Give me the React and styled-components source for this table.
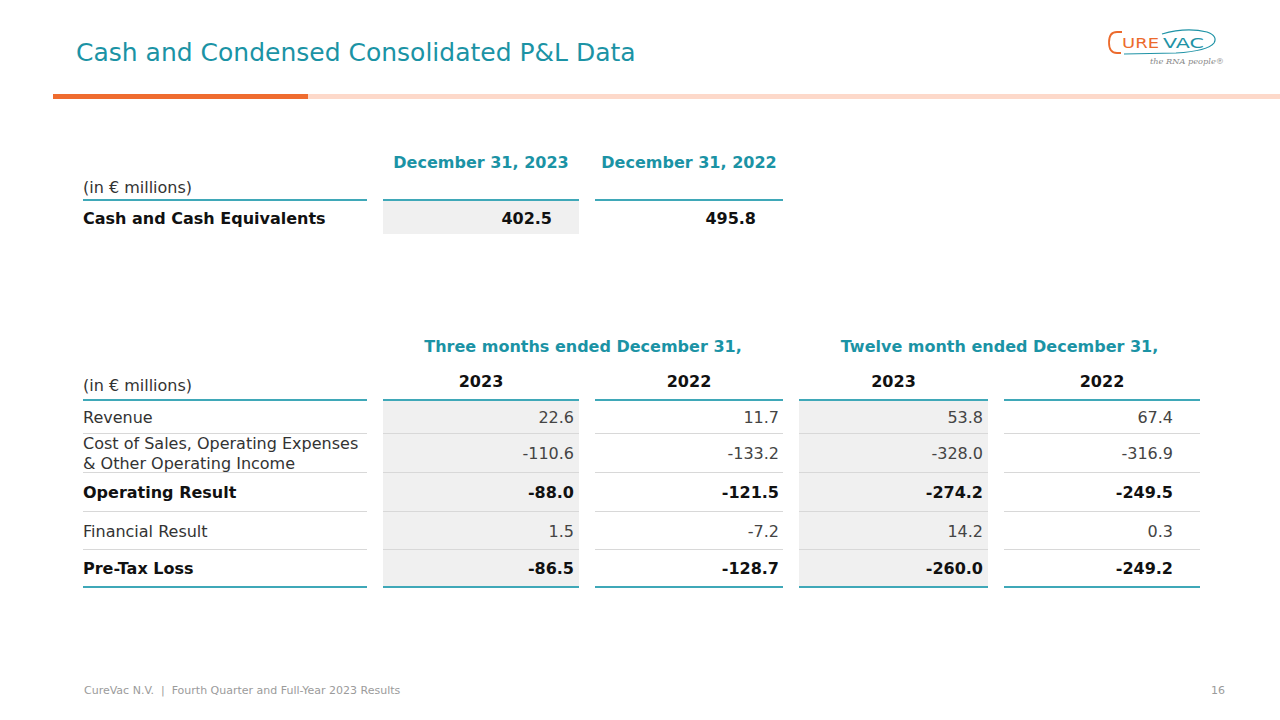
import React from 'react';
import styled, {createGlobalStyle} from "styled-components";

const GlobalStyle = createGlobalStyle`
  html, body {
    margin: 0;
    padding: 0;
    background: #fff;
  }
  * { box-sizing: border-box; }
`;

const TEAL = '#1b93a5';
const LINE = '#3fa8b8';
const SHADE = '#f0f0f0';
const SEP = '#d8d8d8';

const Slide = styled.div`
  width: 1280px;
  height: 720px;
  display: flex;
  flex-direction: column;
  background: #fff;
  font-family: "DejaVu Sans", Verdana, sans-serif;
  color: #222;
  overflow: hidden;
`;

const Header = styled.header`
  height: 94px;
  display: flex;
  justify-content: space-between;
  align-items: flex-start;
  padding: 0 52px 0 76px;
`;

const Title = styled.h1`
  margin: 37px 0 0;
  font-size: 25px;
  line-height: 31px;
  font-weight: 400;
  color: ${TEAL};
`;

const LogoWrap = styled.div`
  margin-top: 26px;
  width: 122px;
  height: 46px;
`;

const Rule = styled.div`
  height: 5px;
  margin-left: 53px;
  background: linear-gradient(to right, #ef6c2f 255px, #fdd9ca 255px);
`;

const Table = styled.div`
  display: grid;
  grid-template-columns: ${p => p.$cols};
  column-gap: 16px;
  margin: ${p => p.$margin};
  font-size: 16px;
`;

const LabelHead = styled.div`
  height: ${p => p.$h}px;
  display: flex;
  align-items: flex-end;
  padding-bottom: ${p => p.$pb}px;
  line-height: 19px;
  color: #333;
  border-bottom: 2px solid ${LINE};
`;

const ColHead = styled.div`
  height: ${p => p.$h}px;
  padding-top: ${p => p.$pt}px;
  text-align: center;
  line-height: 19px;
  font-weight: 700;
  color: ${p => p.$teal ? TEAL : '#111'};
  border-bottom: ${p => p.$line ? `2px solid ${LINE}` : 'none'};
`;

const GroupHead = styled.div`
  grid-column: ${p => p.$span};
  height: 22px;
  line-height: 22px;
  text-align: center;
  font-weight: 700;
  color: ${TEAL};
`;

const Spacer = styled.div`
  grid-column: ${p => p.$span};
`;

const Label = styled.div`
  height: ${p => p.$h}px;
  display: flex;
  align-items: center;
  padding-top: 2px;
  line-height: 20px;
  font-weight: ${p => p.$bold ? 700 : 400};
  color: ${p => p.$bold ? '#111' : '#333'};
  border-bottom: ${p => p.$last ? `2px solid ${LINE}` : p.$sep ? `1px solid ${SEP}` : 'none'};
`;

const Value = styled(Label)`
  justify-content: flex-end;
  padding-right: ${p => p.$pr}px;
  background: ${p => p.$shade ? SHADE : 'transparent'};
  color: ${p => p.$bold ? '#111' : '#444'};
`;

const Footer = styled.footer`
  margin-top: auto;
  display: flex;
  justify-content: space-between;
  padding: 0 55px 23px 84px;
  font-size: 11px;
  line-height: 13px;
  color: #9b9b9b;
`;

const Logo = () => (
    <svg width="122" height="46" viewBox="0 0 122 46">
        <path d="M16 6 L11 6 Q3 6 3 16.5 Q3 27 11 27 L15 27" fill="none" stroke="#ec6a2c" strokeWidth="1.8"/>
        <text x="16" y="21.5" fontFamily="DejaVu Sans, sans-serif" fontSize="14" fill="#ec6a2c" textLength="37" lengthAdjust="spacingAndGlyphs">URE</text>
        <text x="57" y="21.5" fontFamily="DejaVu Sans, sans-serif" fontSize="14" fill="#1f93a6" textLength="41" lengthAdjust="spacingAndGlyphs">VAC</text>
        <path d="M56 8 Q80 1 101 6 Q112 10 108 17 Q102 25 70 27 L18 28" fill="none" stroke="#1f93a6" strokeWidth="1.2"/>
        <text x="118" y="38" fontFamily="DejaVu Serif, serif" fontStyle="italic" fontSize="8" fill="#888" textAnchor="end" textLength="74" lengthAdjust="spacingAndGlyphs">the RNA people®</text>
    </svg>
);

const topCols = '284px 196px 188px';
const bottomCols = '284px 196px 188px 189px 196px';
const pads = [5, 4, 5, 27];

const rows = [
    {label: 'Revenue', values: ['22.6', '11.7', '53.8', '67.4'], h: 33},
    {label: <>Cost of Sales, Operating Expenses<br/>&amp; Other Operating Income</>, values: ['-110.6', '-133.2', '-328.0', '-316.9'], h: 39},
    {label: 'Operating Result', values: ['-88.0', '-121.5', '-274.2', '-249.5'], h: 39, bold: true},
    {label: 'Financial Result', values: ['1.5', '-7.2', '14.2', '0.3'], h: 38},
    {label: 'Pre-Tax Loss', values: ['-86.5', '-128.7', '-260.0', '-249.2'], h: 38, bold: true, last: true},
];

const App = () => {
    return (
        <Slide>
            <GlobalStyle/>
            <Header>
                <Title>Cash and Condensed Consolidated P&amp;L Data</Title>
                <LogoWrap><Logo/></LogoWrap>
            </Header>
            <Rule/>

            <Table $cols={topCols} $margin="51px 0 0 83px">
                <LabelHead $h={51} $pb={2}>(in € millions)</LabelHead>
                <ColHead $h={51} $pt={3} $teal $line>December 31, 2023</ColHead>
                <ColHead $h={51} $pt={3} $teal $line>December 31, 2022</ColHead>
                <Label $h={33} $bold>Cash and Cash Equivalents</Label>
                <Value $h={33} $bold $shade $pr={27}>402.5</Value>
                <Value $h={33} $bold $pr={27}>495.8</Value>
            </Table>

            <Table $cols={bottomCols} $margin="102px 0 0 83px">
                <Spacer $span="1 / 2"/>
                <GroupHead $span="2 / 4">Three months ended December 31,</GroupHead>
                <GroupHead $span="4 / 6">Twelve month ended December 31,</GroupHead>
                <LabelHead $h={43} $pb={4}>(in € millions)</LabelHead>
                {['2023', '2022', '2023', '2022'].map((y, i) => (
                    <ColHead key={i} $h={43} $pt={14} $line>{y}</ColHead>
                ))}
                {rows.map((r, ri) => (
                    <React.Fragment key={ri}>
                        <Label $h={r.h} $bold={r.bold} $sep $last={r.last}>{r.label}</Label>
                        {r.values.map((v, i) => (
                            <Value key={i} $h={r.h} $bold={r.bold} $sep $last={r.last}
                                   $shade={i % 2 === 0} $pr={pads[i]}>{v}</Value>
                        ))}
                    </React.Fragment>
                ))}
            </Table>

            <Footer>
                <span>CureVac N.V. &nbsp;|&nbsp; Fourth Quarter and Full-Year 2023 Results</span>
                <span>16</span>
            </Footer>
        </Slide>
    );
};

export default App;
